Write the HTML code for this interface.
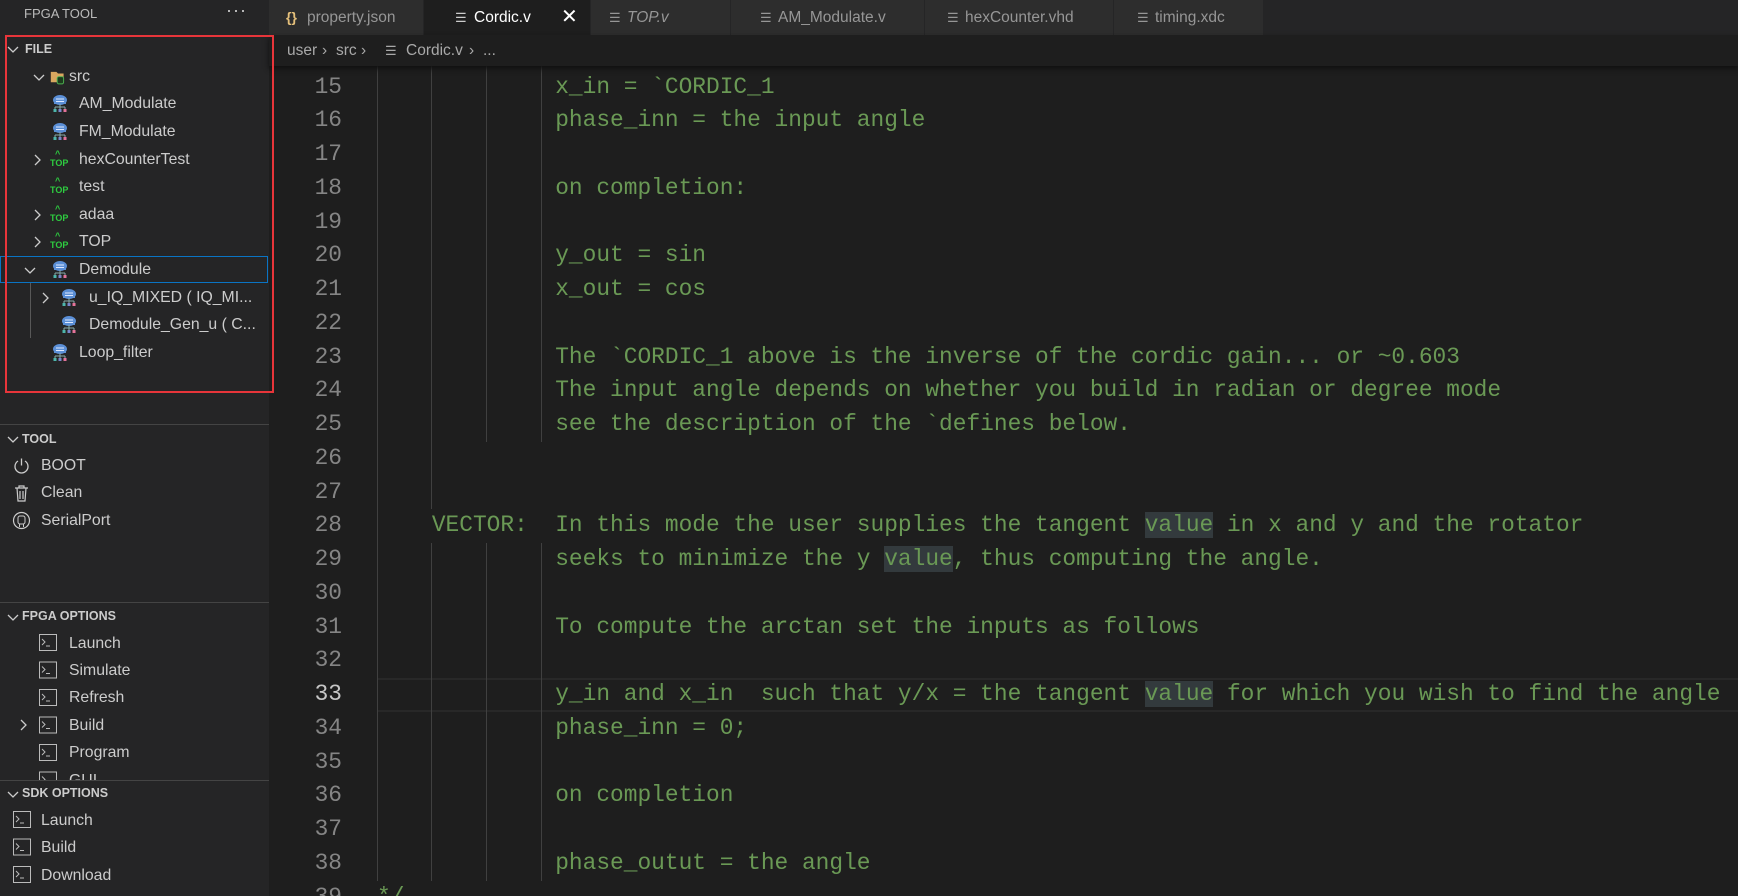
<!DOCTYPE html>
<html><head><meta charset="utf-8">
<style>
*{margin:0;padding:0;box-sizing:border-box}
html,body{width:1738px;height:896px;overflow:hidden}
body{background:#1e1e1e;font-family:"Liberation Sans",sans-serif;position:relative}
.a{position:absolute;white-space:nowrap}
#side{position:absolute;left:0;top:0;width:269px;height:896px;background:#252526;color:#cccccc;font-size:15.8px;overflow:hidden}
.row{position:absolute;height:27px;line-height:27px;white-space:nowrap}
.hdr{font-weight:bold;font-size:12.5px;color:#cccccc}
.div{position:absolute;left:0;width:269px;height:1px;background:#444}
.tab{position:absolute;top:0;height:35px;background:#2d2d2d;color:#969696;font-size:15.5px;line-height:35px;border-right:1px solid #252526}
.code{position:absolute;font-family:"Liberation Mono",monospace;font-size:22.85px;line-height:33.75px;height:33.75px;white-space:pre}
.ln{left:280px;width:62px;text-align:right;color:#858585}
.tx{left:377px;color:#6a9955}
.g{position:absolute;width:1px;background:#404040}
.hl{background:#333a3d}
</style></head><body>

<!-- sidebar -->
<div id="side">
  <div class="a" style="left:24px;top:5px;font-size:13px;color:#bbbbbb;line-height:18px">FPGA TOOL</div>
  <div class="a" style="left:226px;top:0px;font-size:18px;color:#ccc;letter-spacing:1px">···</div>

  <div class="row hdr" style="left:25px;top:36px">FILE</div>
  <svg class="a" style="left:7px;top:44px" width="12" height="10"><path d="M1 3l5 5 5-5" stroke="#ccc" fill="none" stroke-width="1.3"/></svg>

  <!-- src -->
  <svg class="a" style="left:33px;top:72px" width="12" height="10"><path d="M1 3l5 5 5-5" stroke="#ccc" fill="none" stroke-width="1.3"/></svg>
  <svg class="a" style="left:50px;top:69px" width="16" height="17" viewBox="0 0 20 20"><path d="M1 3h7l2 2h7v11H1z" fill="#d9a75f"/><rect x="9" y="9" width="8" height="9" rx="2" fill="#1d3b1d" stroke="#4caf50" stroke-width="1.2"/></svg>
  <div class="row" style="left:69px;top:63px">src</div>

  <!-- module rows -->
  <div class="row" style="left:79px;top:90px">AM_Modulate</div>
  <div class="row" style="left:79px;top:118px">FM_Modulate</div>
  <div class="row" style="left:79px;top:146px">hexCounterTest</div>
  <div class="row" style="left:79px;top:173px">test</div>
  <div class="row" style="left:79px;top:201px">adaa</div>
  <div class="row" style="left:79px;top:228px">TOP</div>
  <div class="a" style="left:0;top:256px;width:268px;height:27px;border:1px solid #0a74c4"></div>
  <div class="row" style="left:79px;top:256px">Demodule</div>
  <div class="row" style="left:89px;top:284px">u_IQ_MIXED ( IQ_MI...</div>
  <div class="row" style="left:89px;top:311px">Demodule_Gen_u ( C...</div>
  <div class="row" style="left:79px;top:339px">Loop_filter</div>
  <div class="a" style="left:30px;top:283px;width:1px;height:55px;background:#585858"></div>

  <!-- chevrons right -->
  <svg class="a" style="left:32px;top:154px" width="10" height="12"><path d="M3 1l5 5-5 5" stroke="#ccc" fill="none" stroke-width="1.3"/></svg>
  <svg class="a" style="left:32px;top:209px" width="10" height="12"><path d="M3 1l5 5-5 5" stroke="#ccc" fill="none" stroke-width="1.3"/></svg>
  <svg class="a" style="left:32px;top:236px" width="10" height="12"><path d="M3 1l5 5-5 5" stroke="#ccc" fill="none" stroke-width="1.3"/></svg>
  <svg class="a" style="left:24px;top:265px" width="12" height="10"><path d="M1 3l5 5 5-5" stroke="#ccc" fill="none" stroke-width="1.3"/></svg>
  <svg class="a" style="left:40px;top:292px" width="10" height="12"><path d="M3 1l5 5-5 5" stroke="#ccc" fill="none" stroke-width="1.3"/></svg>

  <!-- module icons -->
  <svg width="0" height="0" style="position:absolute"><defs>
    <g id="mod"><ellipse cx="9" cy="6" rx="7" ry="5" fill="#5b8fd6"/><rect x="3" y="5" width="12" height="5" fill="#5b8fd6"/><path d="M5 5h8M5 7.5h8" stroke="#dde8ff" stroke-width="1"/><path d="M9 10v3M4 13h10M4 13v2M9 13v2M14 13v2" stroke="#8aa" stroke-width="1" fill="none"/><rect x="2.5" y="15" width="3" height="3" fill="#4db6ac"/><rect x="7.5" y="15" width="3" height="3" fill="#7986cb"/><rect x="12.5" y="15" width="3" height="3" fill="#e57399"/></g>
    <g id="tm"><rect x="1.5" y="1.5" width="17" height="16"/><path d="M4 6l3 3-3 3M8 13h4"/></g>
  </defs></svg>
  <svg class="a" style="left:51px;top:94px" width="18" height="19"><use href="#mod"/></svg>
  <svg class="a" style="left:51px;top:122px" width="18" height="19"><use href="#mod"/></svg>
  <svg class="a" style="left:51px;top:260px" width="18" height="19"><use href="#mod"/></svg>
  <svg class="a" style="left:60px;top:288px" width="18" height="19"><use href="#mod"/></svg>
  <svg class="a" style="left:60px;top:315px" width="18" height="19"><use href="#mod"/></svg>
  <svg class="a" style="left:51px;top:343px" width="18" height="19"><use href="#mod"/></svg>
  <!-- TOP icons -->
  <div class="a" style="left:50px;top:150px;font-size:9px;color:#2ecc40;line-height:9px;font-weight:bold">&nbsp;&nbsp;^<br>TOP</div>
  <div class="a" style="left:50px;top:177px;font-size:9px;color:#2ecc40;line-height:9px;font-weight:bold">&nbsp;&nbsp;^<br>TOP</div>
  <div class="a" style="left:50px;top:205px;font-size:9px;color:#2ecc40;line-height:9px;font-weight:bold">&nbsp;&nbsp;^<br>TOP</div>
  <div class="a" style="left:50px;top:232px;font-size:9px;color:#2ecc40;line-height:9px;font-weight:bold">&nbsp;&nbsp;^<br>TOP</div>

  <!-- TOOL -->
  <div class="div" style="top:424px"></div>
  <svg class="a" style="left:7px;top:434px" width="12" height="10"><path d="M1 3l5 5 5-5" stroke="#ccc" fill="none" stroke-width="1.3"/></svg>
  <div class="row hdr" style="left:22px;top:426px">TOOL</div>
  <svg class="a" style="left:13px;top:457px" width="17" height="17"><path d="M5 4a6.5 6.5 0 1 0 7 0" stroke="#ccc" fill="none" stroke-width="1.3"/><path d="M8.5 1.5v7" stroke="#ccc" stroke-width="1.3"/></svg>
  <div class="row" style="left:41px;top:452px">BOOT</div>
  <svg class="a" style="left:13px;top:484px" width="17" height="18"><path d="M2 4h13M6 4V2h5v2M4 4l1 13h7l1-13M7 7v8M10 7v8" stroke="#ccc" fill="none" stroke-width="1.2"/></svg>
  <div class="row" style="left:41px;top:479px">Clean</div>
  <svg class="a" style="left:12px;top:511px" width="19" height="19"><circle cx="9.5" cy="9.5" r="8" stroke="#ccc" fill="none" stroke-width="1.2"/><rect x="6" y="5" width="7" height="8" rx="2" stroke="#ccc" fill="none"/><path d="M7.5 13v3M11.5 13v3" stroke="#ccc"/></svg>
  <div class="row" style="left:41px;top:507px">SerialPort</div>

  <!-- FPGA OPTIONS -->
  <div class="div" style="top:602px"></div>
  <svg class="a" style="left:7px;top:612px" width="12" height="10"><path d="M1 3l5 5 5-5" stroke="#ccc" fill="none" stroke-width="1.3"/></svg>
  <div class="row hdr" style="left:22px;top:603px">FPGA OPTIONS</div>
  <div class="a" style="left:0;top:628px;width:269px;height:152px;overflow:hidden">
    <div class="row" style="left:69px;top:2px">Launch</div>
    <div class="row" style="left:69px;top:29px">Simulate</div>
    <div class="row" style="left:69px;top:56px">Refresh</div>
    <div class="row" style="left:69px;top:84px">Build</div>
    <div class="row" style="left:69px;top:111px">Program</div>
    <div class="row" style="left:69px;top:139px">GUI</div>
    <svg class="a" style="left:18px;top:91px" width="10" height="12"><path d="M3 1l5 5-5 5" stroke="#ccc" fill="none" stroke-width="1.3"/></svg>
    <svg class="a" style="left:38px;top:5px" width="20" height="147"><g fill="none" stroke="#bbb" stroke-width="1"><use href="#tm"/><use href="#tm" y="27.5"/><use href="#tm" y="55"/><use href="#tm" y="82.5"/><use href="#tm" y="110"/><use href="#tm" y="137.5"/></g></svg>
  </div>

  <!-- SDK OPTIONS -->
  <div class="div" style="top:780px"></div>
  <svg class="a" style="left:7px;top:789px" width="12" height="10"><path d="M1 3l5 5 5-5" stroke="#ccc" fill="none" stroke-width="1.3"/></svg>
  <div class="row hdr" style="left:22px;top:780px">SDK OPTIONS</div>
  <div class="row" style="left:41px;top:807px">Launch</div>
  <div class="row" style="left:41px;top:834px">Build</div>
  <div class="row" style="left:41px;top:862px">Download</div>
  <svg class="a" style="left:12px;top:810px" width="22" height="80"><g fill="none" stroke="#bbb" stroke-width="1"><use href="#tm"/><use href="#tm" y="27.5"/><use href="#tm" y="55"/></g></svg>
</div>
<!-- red box -->
<div class="a" style="left:5px;top:35px;width:269px;height:358px;border:2px solid #e8353a;z-index:5"></div>

<!-- tab bar -->
<div class="a" style="left:269px;top:0;width:1469px;height:35px;background:#252526"></div>
<div class="tab" style="left:269px;width:155px"><span class="a" style="left:17px;color:#e5c07b;font-weight:bold;font-size:14px">{}</span><span class="a" style="left:38px">property.json</span></div>
<div class="tab" style="left:424px;width:167px;background:#1e1e1e;color:#fff"><span class="a" style="left:31px;font-size:13px;color:#ccc">☰</span><span class="a" style="left:50px">Cordic.v</span><span class="a" style="left:137px;font-size:20px">✕</span></div>
<div class="tab" style="left:591px;width:140px"><span class="a" style="left:18px;font-size:13px">☰</span><span class="a" style="left:36px;font-style:italic">TOP.v</span></div>
<div class="tab" style="left:731px;width:194px"><span class="a" style="left:29px;font-size:13px">☰</span><span class="a" style="left:47px">AM_Modulate.v</span></div>
<div class="tab" style="left:925px;width:189px"><span class="a" style="left:22px;font-size:13px">☰</span><span class="a" style="left:40px">hexCounter.vhd</span></div>
<div class="tab" style="left:1114px;width:150px"><span class="a" style="left:23px;font-size:13px">☰</span><span class="a" style="left:41px">timing.xdc</span></div>

<!-- breadcrumb -->
<div class="a" style="left:269px;top:35px;width:1469px;height:31px;background:#1e1e1e;z-index:3;box-shadow:0 3px 5px #111;color:#a9a9a9;font-size:15.5px;line-height:31px">
  <span class="a" style="left:18px">user</span><span class="a" style="left:53px">›</span>
  <span class="a" style="left:67px">src</span><span class="a" style="left:92px">›</span>
  <span class="a" style="left:116px;font-size:13px">☰</span><span class="a" style="left:137px">Cordic.v</span><span class="a" style="left:200px">›</span>
  <span class="a" style="left:214px">...</span>
</div>

<!-- editor -->
<div class="a" style="left:269px;top:66px;width:1469px;height:830px;overflow:hidden">
 <div class="a" style="left:-269px;top:-66px;width:1738px;height:896px">
  <div class="a" style="left:377px;top:678px;width:1361px;height:34px;border-top:2px solid #282828;border-bottom:2px solid #282828"></div>
  <div class="g" style="left:377px;top:36px;height:845px"></div>
  <div class="g" style="left:431px;top:36px;height:473px"></div>
  <div class="g" style="left:486px;top:36px;height:406px"></div>
  <div class="g" style="left:541px;top:36px;height:406px"></div>
  <div class="g" style="left:431px;top:543px;height:338px"></div>
  <div class="g" style="left:486px;top:543px;height:338px"></div>
  <div class="g" style="left:541px;top:543px;height:338px"></div>

  <div class="code ln" style="top:36.9px">14</div><div class="code tx" style="top:36.9px">             y_in = 0</div>
  <div class="code ln" style="top:70.6px">15</div><div class="code tx" style="top:70.6px">             x_in = `CORDIC_1</div>
  <div class="code ln" style="top:104.4px">16</div><div class="code tx" style="top:104.4px">             phase_inn = the input angle</div>
  <div class="code ln" style="top:138.1px">17</div>
  <div class="code ln" style="top:171.9px">18</div><div class="code tx" style="top:171.9px">             on completion:</div>
  <div class="code ln" style="top:205.6px">19</div>
  <div class="code ln" style="top:239.4px">20</div><div class="code tx" style="top:239.4px">             y_out = sin</div>
  <div class="code ln" style="top:273.1px">21</div><div class="code tx" style="top:273.1px">             x_out = cos</div>
  <div class="code ln" style="top:306.9px">22</div>
  <div class="code ln" style="top:340.6px">23</div><div class="code tx" style="top:340.6px">             The `CORDIC_1 above is the inverse of the cordic gain... or ~0.603</div>
  <div class="code ln" style="top:374.4px">24</div><div class="code tx" style="top:374.4px">             The input angle depends on whether you build in radian or degree mode</div>
  <div class="code ln" style="top:408.1px">25</div><div class="code tx" style="top:408.1px">             see the description of the `defines below.</div>
  <div class="code ln" style="top:441.9px">26</div>
  <div class="code ln" style="top:475.6px">27</div>
  <div class="code ln" style="top:509.4px">28</div><div class="code tx" style="top:509.4px">    VECTOR:  In this mode the user supplies the tangent <span class="hl">value</span> in x and y and the rotator</div>
  <div class="code ln" style="top:543.1px">29</div><div class="code tx" style="top:543.1px">             seeks to minimize the y <span class="hl">value</span>, thus computing the angle.</div>
  <div class="code ln" style="top:576.9px">30</div>
  <div class="code ln" style="top:610.6px">31</div><div class="code tx" style="top:610.6px">             To compute the arctan set the inputs as follows</div>
  <div class="code ln" style="top:644.4px">32</div>
  <div class="code ln" style="top:678.1px;color:#c6c6c6">33</div><div class="code tx" style="top:678.1px">             y_in and x_in  such that y/x = the tangent <span class="hl">value</span> for which you wish to find the angle</div>
  <div class="code ln" style="top:711.9px">34</div><div class="code tx" style="top:711.9px">             phase_inn = 0;</div>
  <div class="code ln" style="top:745.6px">35</div>
  <div class="code ln" style="top:779.4px">36</div><div class="code tx" style="top:779.4px">             on completion</div>
  <div class="code ln" style="top:813.1px">37</div>
  <div class="code ln" style="top:846.9px">38</div><div class="code tx" style="top:846.9px">             phase_outut = the angle</div>
  <div class="code ln" style="top:880.6px">39</div><div class="code tx" style="top:880.6px">*/</div>
 </div>
</div>
</body></html>
